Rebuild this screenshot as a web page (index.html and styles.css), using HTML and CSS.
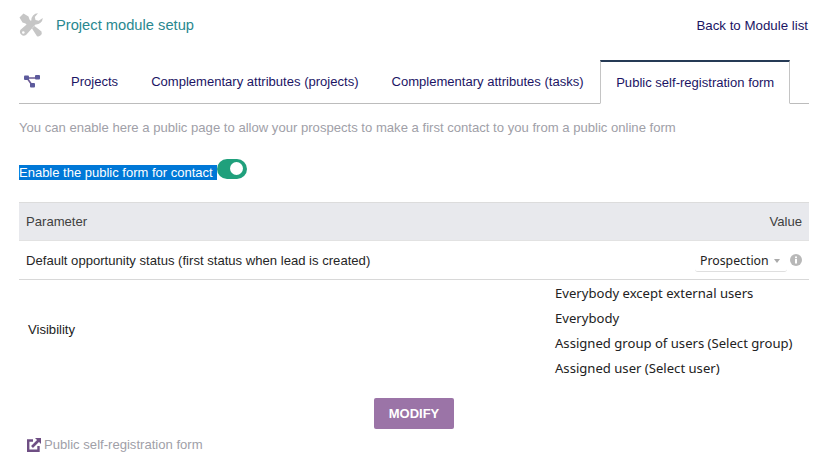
FILE: index.html
```html
<!DOCTYPE html>
<html lang="en">

<head>
    <meta charset="UTF-8">
    <title>Project module setup</title>
    <link rel="stylesheet" href="styles.css">
</head>

<body>
    <div class="mainContainer">
        <header class="topBar">
            <div class="titleBox">
                <svg class="toolsIcon" width="24" height="24" viewBox="0 0 24 24">
                    <!-- screwdriver -->
                    <path d="M0.500 4.500 L4.500 0.500 L9.500 3.500 L10.500 6.500 L15 11 L11 15 L6.500 10.500 L3.500 9.500 Z" fill="#c6c6c6" />
                    <path d="M13 15.500 L15.500 13 L22.500 18.500 A3.600 3.600 0 0 1 18 23.200 Z" fill="#c6c6c6" />
                    <!-- wrench -->
                    <path d="M23.800 5 A6.800 6.800 0 0 1 16.500 11.500 L7 22 A3.900 3.900 0 0 1 1.500 16.800 L12.300 7.500 A6.800 6.800 0 0 1 19 0.200 L15.800 4 L16.500 7 L19.700 7.800 Z" fill="#c6c6c6" />
                    <circle cx="4.300" cy="19.500" r="1.300" fill="#fff" />
                </svg>
                <span class="pageTitle">Project module setup</span>
            </div>
            <a class="backLink">Back to Module list</a>
        </header>

        <nav class="tabs">
            <a class="tab iconTab">
                <svg width="16" height="13" viewBox="0 0 16 13">
                    <path d="M3 3 H13 M3 3 L8 10" stroke="#6c5b95" stroke-width="1.600" fill="none" />
                    <rect x="0" y="0.500" width="5" height="4.500" rx="1" fill="#5c5a9c" />
                    <rect x="11" y="0" width="5" height="4.500" rx="1" fill="#5c5a9c" />
                    <rect x="6" y="8" width="5" height="4.500" rx="1" fill="#5c5a9c" />
                </svg>
            </a>
            <a class="tab">Projects</a>
            <a class="tab">Complementary attributes (projects)</a>
            <a class="tab">Complementary attributes (tasks)</a>
            <a class="tab activeTab">Public self-registration form</a>
        </nav>

        <p class="intro">You can enable here a public page to allow your prospects to make a first contact to you from a public online form</p>

        <div class="enableRow">
            <span class="selected">Enable the public form for contact</span>
            <span class="toggle"><span class="knob"></span></span>
        </div>

        <div class="paramHead">
            <span>Parameter</span>
            <span>Value</span>
        </div>
        <div class="paramRow">
            <span>Default opportunity status (first status when lead is created)</span>
            <div class="statusValue">
                <span class="selectBox">Prospection<span class="caret"></span></span>
                <svg class="infoIcon" width="12" height="12" viewBox="0 0 12 12">
                    <circle cx="6" cy="6" r="6" fill="#b8b8b8" />
                    <rect x="5" y="5" width="2" height="4.500" fill="#fff" />
                    <rect x="5" y="2.500" width="2" height="1.700" fill="#fff" />
                </svg>
            </div>
        </div>
        <div class="visibilityRow">
            <span class="visibilityLabel">Visibility</span>
            <ul class="visibilityList">
                <li>Everybody except external users</li>
                <li>Everybody</li>
                <li>Assigned group of users (Select group)</li>
                <li>Assigned user (Select user)</li>
            </ul>
        </div>

        <div class="buttonRow">
            <button class="modifyButton">MODIFY</button>
        </div>

        <a class="publicLink">
            <svg width="14" height="14" viewBox="0 0 14 14">
                <path d="M6 2.500 H1.200 V12.800 H11.500 V8" stroke="#6f4f84" stroke-width="2.400" fill="none" />
                <path d="M5 9 L11.500 2.500" stroke="#6f4f84" stroke-width="2.600" fill="none" />
                <path d="M8 0 H14 V6 Z" fill="#6f4f84" />
            </svg>
            <span>Public self-registration form</span>
        </a>
    </div>
</body>

</html>
```

FILE: styles.css
```css
html,
body {
    margin: 0;
    padding: 0;
    background-color: white;
}

.mainContainer {
    width: 790px;
    margin-left: 19px;
    font-family: "Liberation Sans", Arial, sans-serif;
    font-size: 13.1px;
    color: #262626;
}

.topBar {
    display: flex;
    justify-content: space-between;
    align-items: center;
    height: 50px;
}

.titleBox {
    display: flex;
    align-items: center;
    gap: 13px;
}

.toolsIcon {
    display: block;
}

.pageTitle {
    font-size: 14.7px;
    color: #29888f;
}

.backLink {
    font-size: 13.3px;
    color: #1b1464;
    margin-right: 1px;
}

.tabs {
    display: flex;
    height: 43px;
    margin-top: 10px;
    border-bottom: 1px solid #bcbcbc;
    font-size: 13.05px;
}

.tab {
    display: flex;
    align-items: center;
    padding: 0 16.5px;
    color: #1b1464;
}

.iconTab {
    padding: 0 14.5px 0 5px;
}

.activeTab {
    margin-bottom: -1px;
    border: 1px solid #c4c4c4;
    border-top: 2px solid #253a55;
    border-bottom: 1px solid white;
    background-color: white;
    padding: 0 15px;
}

.intro {
    margin: 16px 0 0;
    line-height: 15px;
    color: #a0a0a8;
}

.enableRow {
    display: flex;
    align-items: flex-start;
    height: 43px;
    margin-top: 24px;
}

.selected {
    margin-top: 6px;
    height: 15px;
    line-height: 15px;
    width: 198px;
    background-color: #0078d7;
    color: white;
    font-size: 13px;
    white-space: nowrap;
}

.toggle {
    display: block;
    width: 30px;
    height: 20px;
    border-radius: 10px;
    background-color: #20a07c;
    position: relative;
}

.knob {
    position: absolute;
    right: 4px;
    top: 3px;
    width: 13px;
    height: 13px;
    border-radius: 50%;
    background-color: white;
}

.paramHead {
    display: flex;
    justify-content: space-between;
    align-items: center;
    height: 37px;
    padding: 0 7px;
    background-color: #e8e9ed;
    border-top: 1px solid #dcdcdc;
    color: #404040;
}

.paramRow {
    display: flex;
    justify-content: space-between;
    align-items: center;
    height: 38px;
    padding: 0 7px;
    border-top: 1px solid #e2e2e2;
    border-bottom: 1px solid #d8d8d8;
}

.statusValue {
    display: flex;
    align-items: center;
    gap: 3px;
}

.selectBox {
    display: flex;
    align-items: center;
    height: 24px;
    padding: 2px 0 0 5px;
    width: 92px;
    box-sizing: border-box;
    border-bottom: 1px solid #dfdfdf;
    border-radius: 3px;
    font-family: "Noto Sans", sans-serif;
    font-size: 12.3px;
    color: #222;
}

.caret {
    margin-left: 5px;
    border-left: 3px solid transparent;
    border-right: 3px solid transparent;
    border-top: 4px solid #aaa;
}

.infoIcon {
    display: block;
}

.visibilityRow {
    display: flex;
    align-items: center;
    height: 100px;
    padding-left: 9px;
}

.visibilityLabel {
    width: 527px;
    margin-bottom: 2px;
    color: #222;
}

.visibilityList {
    list-style: none;
    margin: 0;
    padding: 2px 0 0;
    font-family: "Noto Sans", sans-serif;
    font-size: 13.1px;
    color: #222;
}

.visibilityList li {
    height: 25px;
    line-height: 25px;
}

.buttonRow {
    display: flex;
    justify-content: center;
    margin-top: 18px;
}

.modifyButton {
    width: 80px;
    height: 31px;
    border: none;
    border-radius: 2px;
    background-color: #9b74a7;
    color: white;
    font-family: "Liberation Sans", Arial, sans-serif;
    font-size: 13px;
    font-weight: bold;
}

.publicLink {
    display: flex;
    align-items: center;
    gap: 3px;
    margin: 8px 0 0 8px;
    color: #a0a0a8;
}
```
